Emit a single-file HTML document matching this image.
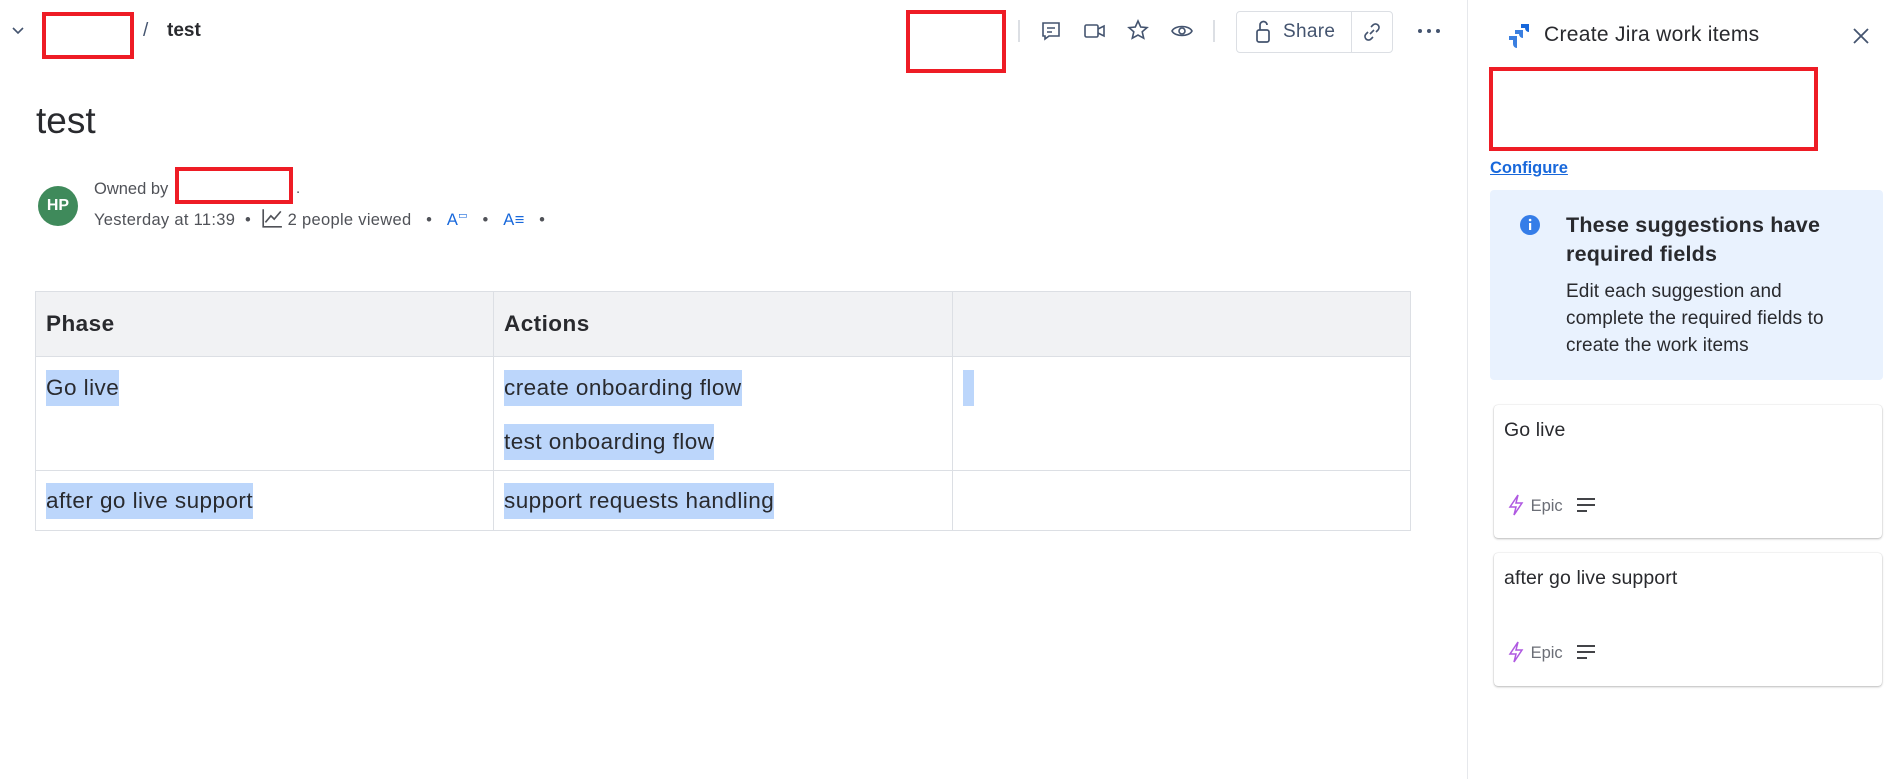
<!DOCTYPE html>
<html><head><meta charset="utf-8"><style>
*{box-sizing:border-box;margin:0;padding:0}
body{width:1898px;height:779px;overflow:hidden;background:#fff;font-family:"Liberation Sans",sans-serif;color:#292a2e;position:relative}
.a{position:absolute}
.red{position:absolute;border:4px solid #ee1c25}
.hl{background:#bcd6fb}
td{border:1px solid #dcdfe4;vertical-align:top;padding:0 10px;font-size:22.5px;letter-spacing:.45px}
</style></head><body>
<svg class="a" style="left:10px;top:24px" width="16" height="14" viewBox="0 0 16 14"><path d="M3 4l5 5 5-5" stroke="#44546f" stroke-width="1.6" fill="none"/></svg>
<div class="red" style="left:42px;top:12px;width:92px;height:47px"></div>
<div class="a" style="left:143px;top:20px;font-size:19px;color:#44546f">/</div>
<div class="a" style="left:167px;top:20px;font-size:19px;font-weight:bold">test</div>
<div class="red" style="left:906px;top:10px;width:100px;height:63px"></div>
<div class="a" style="left:1018px;top:20px;width:2px;height:22px;background:#dcdfe4"></div>
<svg class="a" style="left:1040px;top:20px" width="22" height="22" viewBox="0 0 22 22" fill="none" stroke="#44546f" stroke-width="1.6"><path d="M3 3h16v13H9l-4 3v-3H3z"/><path d="M7 8h8M7 12h5"/></svg>
<svg class="a" style="left:1083px;top:20px" width="24" height="22" viewBox="0 0 24 22" fill="none" stroke="#44546f" stroke-width="1.6"><rect x="2" y="5" width="13" height="12" rx="1.5"/><path d="M15 9l6-3v10l-6-3"/></svg>
<svg class="a" style="left:1127px;top:19px" width="22" height="22" viewBox="0 0 22 22" fill="none" stroke="#44546f" stroke-width="1.6"><path d="M11 2l2.7 6 6.3.6-4.8 4.2 1.5 6.4L11 16l-5.7 3.2 1.5-6.4L2 8.6 8.3 8z"/></svg>
<svg class="a" style="left:1170px;top:20px" width="24" height="22" viewBox="0 0 24 22" fill="none" stroke="#44546f" stroke-width="1.6"><path d="M2 11c3-6 17-6 20 0-3 6-17 6-20 0z"/><circle cx="12" cy="11" r="3"/></svg>
<div class="a" style="left:1213px;top:20px;width:2px;height:22px;background:#dcdfe4"></div>
<div class="a" style="left:1236px;top:11px;width:157px;height:42px;border:1px solid #dcdfe4;border-radius:4px"></div>
<div class="a" style="left:1351px;top:11px;width:1px;height:42px;background:#dcdfe4"></div>
<svg class="a" style="left:1254px;top:19px" width="18" height="26" viewBox="0 0 18 26" fill="none" stroke="#44546f" stroke-width="1.7"><rect x="3" y="11" width="12" height="12" rx="2"/><path d="M6 11V6a3.5 3.5 0 0 1 7 0"/></svg>
<div class="a" style="left:1283px;top:21px;font-size:19px;color:#44546f;letter-spacing:.3px">Share</div>
<svg class="a" style="left:1361px;top:21px" width="22" height="22" viewBox="0 0 22 22" fill="none" stroke="#44546f" stroke-width="1.6"><path d="M9 13l4-4M10 6l2-2a3.5 3.5 0 0 1 5 5l-2 2M12 16l-2 2a3.5 3.5 0 0 1-5-5l2-2"/></svg>
<svg class="a" style="left:1417px;top:28px" width="24" height="6" viewBox="0 0 24 6" fill="#44546f"><circle cx="3" cy="3" r="2"/><circle cx="12" cy="3" r="2"/><circle cx="21" cy="3" r="2"/></svg>
<div class="a" style="left:36px;top:100px;font-size:37px">test</div>
<div class="a" style="left:38px;top:186px;width:40px;height:40px;border-radius:50%;background:#3f8a5b;color:#fff;font-size:16px;font-weight:bold;text-align:center;line-height:40px">HP</div>
<div class="a" style="left:94px;top:180px;font-size:16.5px;color:#505258">Owned by</div>
<div class="red" style="left:175px;top:167px;width:118px;height:37px"></div>
<div class="a" style="left:296px;top:180px;font-size:15px;color:#505258">.</div>
<div class="a" style="left:94px;top:208px;font-size:16.5px;color:#505258;white-space:nowrap;letter-spacing:.3px">Yesterday at 11:39 &nbsp;•&nbsp; <svg width="22" height="20" viewBox="0 0 20 18" style="vertical-align:-3px" fill="none" stroke="#505258" stroke-width="1.5"><path d="M2 1v16h17M4 13l5-6 3 3 6-7"/></svg> 2 people viewed &nbsp;&nbsp;• &nbsp;&nbsp;<span style="color:#1868db">A<sup style="font-size:10px">▭</sup></span> &nbsp;&nbsp;• &nbsp;&nbsp;<span style="color:#1868db">A≡</span> &nbsp;&nbsp;•</div>
<table class="a" style="left:35px;top:291px;width:1376px;height:240px;border-collapse:collapse">
<tr style="height:65px;background:#f1f2f4"><td style="width:458px;vertical-align:middle;font-weight:bold">Phase</td><td style="width:459px;vertical-align:middle;font-weight:bold">Actions</td><td></td></tr>
<tr style="height:114px"><td style="padding-top:13px"><span class="hl" style="display:inline-block;line-height:36px">Go live</span></td><td style="padding-top:13px"><span class="hl" style="display:inline-block;line-height:36px">create onboarding flow</span><br><span class="hl" style="display:inline-block;line-height:36px;margin-top:18px">test onboarding flow</span></td><td style="padding-top:13px"><span class="hl" style="display:inline-block;width:11px;height:36px"></span></td></tr>
<tr><td style="padding-top:12px"><span class="hl" style="display:inline-block;line-height:36px">after go live support</span></td><td style="padding-top:12px"><span class="hl" style="display:inline-block;line-height:36px">support requests handling</span></td><td></td></tr>
</table>
<div class="a" style="left:1467px;top:0;width:1px;height:779px;background:#e6e8ec"></div>
<svg class="a" style="left:1503px;top:22px" width="28" height="28" viewBox="0 0 28 28" fill="#1868db"><path d="M18 2h8v8a4 4 0 0 1-4-4V6h-4z"/><path d="M12 8h8v8a4 4 0 0 1-4-4v-0h-4z" opacity=".85"/><path d="M6 14h8v12a4 4 0 0 1-4-4v-4H6z" opacity=".85"/></svg>
<div class="a" style="left:1544px;top:23px;font-size:21px;letter-spacing:.3px">Create Jira work items</div>
<svg class="a" style="left:1852px;top:27px" width="18" height="18" viewBox="0 0 18 18" stroke="#44546f" stroke-width="1.8"><path d="M2 2l14 14M16 2L2 16"/></svg>
<div class="red" style="left:1489px;top:67px;width:329px;height:84px"></div>
<div class="a" style="left:1490px;top:159px;font-size:16.5px;font-weight:bold;color:#1868db;text-decoration:underline">Configure</div>
<div class="a" style="left:1490px;top:190px;width:393px;height:190px;background:#e9f2fe;border-radius:4px"></div>
<svg class="a" style="left:1519px;top:214px" width="22" height="22" viewBox="0 0 22 22"><circle cx="11" cy="11" r="10" fill="#357de8"/><rect x="10" y="9" width="2.2" height="7" fill="#fff"/><circle cx="11.1" cy="6" r="1.3" fill="#fff"/></svg>
<div class="a" style="left:1566px;top:211px;font-size:21.5px;font-weight:bold;line-height:29px;width:300px;letter-spacing:.2px">These suggestions have required fields</div>
<div class="a" style="left:1566px;top:278px;font-size:19px;line-height:27px;width:290px;letter-spacing:.1px">Edit each suggestion and complete the required fields to create the work items</div>
<div class="a" style="left:1494px;top:405px;width:388px;height:133px;border-radius:4px;box-shadow:0 1px 2px rgba(0,0,0,.25),0 0 1px rgba(0,0,0,.2)"></div>
<div class="a" style="left:1504px;top:419px;font-size:19.5px;letter-spacing:.1px">Go live</div>
<div class="a" style="left:1494px;top:553px;width:388px;height:133px;border-radius:4px;box-shadow:0 1px 2px rgba(0,0,0,.25),0 0 1px rgba(0,0,0,.2)"></div>
<div class="a" style="left:1504px;top:567px;font-size:19.5px;letter-spacing:.1px">after go live support</div>
<div class="a" style="left:1506px;top:493px;font-size:16.5px;color:#6b6e76;white-space:nowrap"><svg width="20" height="24" viewBox="0 0 20 24" style="vertical-align:-6px" fill="none" stroke="#af59e1" stroke-width="1.5"><path d="M12 2L4 14h6l-2 8 8-12h-6z"/></svg> Epic &nbsp;&nbsp;<svg width="20" height="16" viewBox="0 0 20 16" style="vertical-align:-2px" stroke="#292a2e" stroke-width="1.8"><path d="M1 2h18M1 8h18M1 14h10"/></svg></div>
<div class="a" style="left:1506px;top:640px;font-size:16.5px;color:#6b6e76;white-space:nowrap"><svg width="20" height="24" viewBox="0 0 20 24" style="vertical-align:-6px" fill="none" stroke="#af59e1" stroke-width="1.5"><path d="M12 2L4 14h6l-2 8 8-12h-6z"/></svg> Epic &nbsp;&nbsp;<svg width="20" height="16" viewBox="0 0 20 16" style="vertical-align:-2px" stroke="#292a2e" stroke-width="1.8"><path d="M1 2h18M1 8h18M1 14h10"/></svg></div>
</body></html>
